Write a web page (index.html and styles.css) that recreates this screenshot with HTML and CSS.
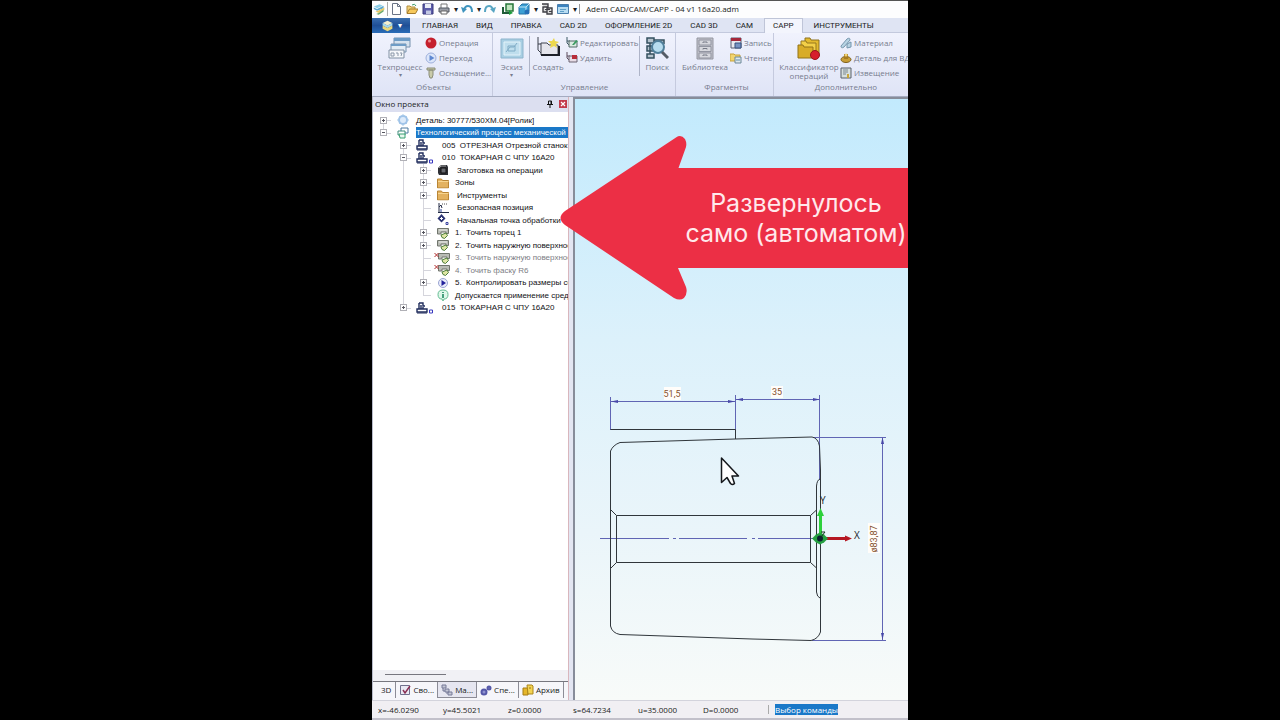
FILE: index.html
```html
<!DOCTYPE html>
<html lang="ru">
<head>
<meta charset="utf-8">
<title>Adem CAD/CAM/CAPP - 04 v1 16a20.adm</title>
<link rel="stylesheet" href="styles.css">
</head>
<body>
<svg class="defs" aria-hidden="true">
  <defs>
    <symbol id="logo" viewBox="0 0 16 16"><path d="M1 5l7-3 4 2-7 3z" fill="#8fd0e8"/><path d="M1 8l4 2 8-3v-3l-8 4-4-2z" fill="#5aa7d0"/><path d="M3 11l4 2 7-4V6L6 10z" fill="#e8c96a"/><path d="M4 14l3 1 6-4v-2l-6 4z" fill="#69a86c"/></symbol>
    <symbol id="logo-light" viewBox="0 0 16 16"><path d="M2 5l6-3 6 3-6 3z" fill="#f4f1cf"/><path d="M2 5v3l6 3 6-3V5L8 8z" fill="#a9dcee"/><path d="M2 8v4l6 3 6-3V8l-6 3z" fill="#e9d77a"/></symbol>
    <symbol id="lathe" viewBox="0 0 14 12"><path d="M3 1h4v3h2M3 1v6M1 7h10v3H1zM5 3v4M7 5v2" fill="none" stroke="#202d5c" stroke-width="1.4"/><path d="M1 11h10" stroke="#202d5c"/></symbol>
    <symbol id="lathe2" viewBox="0 0 18 12"><path d="M3 1h4v3h2M3 1v6M1 7h10v3H1zM5 3v4M7 5v2" fill="none" stroke="#202d5c" stroke-width="1.4"/><path d="M1 11h10" stroke="#202d5c"/><path d="M13.500 8h3v3h-3z" fill="#fff" stroke="#3a3ac0"/></symbol>
    <symbol id="folder" viewBox="0 0 12 11"><path d="M.5 1.500h4l1 1.500h6v7.500H.5z" fill="#e3b260" stroke="#b98534"/><path d="M1 4h10.500" stroke="#f7d58f"/></symbol>
    <symbol id="cut" viewBox="0 0 12 12"><path d="M.5 1.500h11v5H9V5H4v2H.5z" fill="#b9bcb5" stroke="#70756c"/><path d="M2 3h8" stroke="#eef0ea"/><path d="M4 8l5-2 1.500 2.500-3 3-2.500-1z" fill="#dfe6a5" stroke="#4c7d3a"/></symbol>
    <symbol id="cutx" viewBox="0 0 16 12"><path d="M4.500 1.500h11v5H13V5H8v2H4.500z" fill="#b9bcb5" stroke="#70756c"/><path d="M8 8l5-2 1.500 2.500-3 3-2.500-1z" fill="#dfe6a5" stroke="#4c7d3a"/><path d="M.5 1l4 4M4.500 1l-4 4" stroke="#b02a2a"/></symbol>
  </defs>
</svg>
<main class="app">
  <header class="titlebar">
    <svg class="app-logo" viewBox="0 0 16 16"><use href="#logo"/></svg>
    <div class="quick">
      <button aria-label="Новый"><svg viewBox="0 0 12 12"><path d="M2.500.5h5l3 3v8h-8z" fill="#fff" stroke="#6b7486"/><path d="M7.500.5v3h3" fill="none" stroke="#6b7486"/></svg></button>
      <button aria-label="Открыть"><svg viewBox="0 0 12 12"><path d="M1 10V3h3l1 1h4v2" fill="#f2d27a" stroke="#b08a3c"/><path d="M1 10.500L3.500 6H12l-2.500 4.500z" fill="#f7c95b" stroke="#a47b2e"/><path d="M6 2q3-2 4 1" stroke="#3d9d6a" fill="none"/></svg></button>
      <button aria-label="Сохранить"><svg viewBox="0 0 12 12"><path d="M1 1h10v10H1z" fill="#5c5caa" stroke="#39397c"/><path d="M3 1h6v4H3z" fill="#e9ecf7"/><path d="M4 7.500h5V11H4z" fill="#c2c8e3"/></svg></button>
      <button aria-label="Печать"><svg viewBox="0 0 12 12"><path d="M3 5V1h6v4" fill="#fff" stroke="#777"/><path d="M1 5h10v4H1z" fill="#9b9ea6" stroke="#555a64"/><path d="M3 8h6v3H3z" fill="#fff" stroke="#666"/></svg></button>
      <button class="caret" aria-label="Варианты печати">▾</button>
      <button aria-label="Отменить"><svg viewBox="0 0 12 12"><path d="M3 7q1-4 4-4 4 0 4 6" fill="none" stroke="#3e93bd" stroke-width="2"/><path d="M0 4l2 6 4-4z" fill="#3e93bd"/></svg></button>
      <button class="caret" aria-label="Список отмен">▾</button>
      <button aria-label="Вернуть"><svg viewBox="0 0 12 12"><path d="M9 7q-1-4-4-4-4 0-4 6" fill="none" stroke="#58a5c2" stroke-width="2"/><path d="M12 4l-2 6-4-4z" fill="#58a5c2"/></svg></button>
      <button class="apart" aria-label="Обновить"><svg viewBox="0 0 12 12"><path d="M4 1h7v7H4z" fill="#bfe4bd" stroke="#27753a" stroke-width="1.5"/><path d="M1 4v6h7" fill="none" stroke="#1f5c37" stroke-width="2"/><path d="M7 7l4 3-4 2z" fill="#1c9c3c"/></svg></button>
      <button aria-label="Вид"><svg viewBox="0 0 12 12"><path d="M1 4l3-3h7v7l-3 3H1z" fill="#3c9fd4" stroke="#2473a6"/><path d="M1 4h7v7M8 4l3-3" fill="none" stroke="#bfe6f7"/><circle cx="9" cy="9" r="2.500" fill="#256fb6"/></svg></button>
      <button class="caret" aria-label="Варианты вида">▾</button>
      <button aria-label="Слои"><svg viewBox="0 0 12 12"><path d="M1 1h6v3H2v5h4M6 5h5v6H6z" fill="#d9d9d9" stroke="#3f3f46" stroke-width="1.400"/><path d="M4 6.500h5M8 8.500h3" stroke="#3f3f46"/></svg></button>
      <button aria-label="Окно"><svg viewBox="0 0 12 12"><path d="M.5 1.500h11v9H.5z" fill="#b7dcf2" stroke="#4a7fae"/><path d="M1 3h10" stroke="#3b83c0" stroke-width="2"/><path d="M3 6.500h6M3 8.500h4" stroke="#5f9fc8"/></svg></button>
      <button class="caret" aria-label="Настройка панели">▾</button>
    </div>
    <h1 class="title">Adem CAD/CAM/CAPP - 04 v1 16a20.adm</h1>
  </header>

  <nav class="tabs">
    <button class="appmenu" aria-label="Меню"><svg viewBox="0 0 16 16"><use href="#logo-light"/></svg><span>▾</span></button>
    <button>ГЛАВНАЯ</button>
    <button>ВИД</button>
    <button>ПРАВКА</button>
    <button>CAD 2D</button>
    <button>ОФОРМЛЕНИЕ 2D</button>
    <button>CAD 3D</button>
    <button>CAM</button>
    <button class="active">CAPP</button>
    <button>ИНСТРУМЕНТЫ</button>
  </nav>

  <div class="ribbon">
    <section class="group objects">
      <div class="tools">
        <button class="big"><svg viewBox="0 0 24 24"><path d="M6 2h16v9H6z" fill="#d5e2ef" stroke="#7692ae"/><path d="M6 3.500h16" stroke="#6e9cc6" stroke-width="3"/><path d="M3 8h15v8H3z" fill="#e3ecf5" stroke="#7692ae"/><path d="M3 9h15" stroke="#6e9cc6" stroke-width="2"/><path d="M1 14h15v8H1z" fill="#f5f7fa" stroke="#8090a3"/><path d="M3 17h3v3H3zM8 17h2v3M12 17h2l-1 3" fill="none" stroke="#8a97a8"/></svg><span>Техпроцесс</span><i>▾</i></button>
        <div class="stack">
          <button><svg viewBox="0 0 12 12"><circle cx="6" cy="6" r="5.500" fill="#c5202d"/><circle cx="4.500" cy="4" r="1.500" fill="#ee8d8d"/></svg><span>Операция</span></button>
          <button><svg viewBox="0 0 12 12"><circle cx="6" cy="6" r="5" fill="#dce6fa" stroke="#9eb0dc"/><path d="M4.500 3l5 3-5 3z" fill="#5e88d1"/></svg><span>Переход</span></button>
          <button><svg viewBox="0 0 12 12"><path d="M2 1h8v2H2zM4 3h4v5l-1 3H5L4 8z" fill="#c9cba9" stroke="#8a8d78"/></svg><span>Оснащение...</span></button>
        </div>
      </div>
      <h2>Объекты</h2>
    </section>
    <section class="group manage">
      <div class="tools">
        <button class="big"><svg viewBox="0 0 24 24"><path d="M1 3h22v19H1z" fill="#a9cfe3" stroke="#8db4cc"/><path d="M4 6h16v13H4z" fill="#bfdeed" stroke="#e4f3fa"/><path d="M6 16l4-5h4l3-4M8 10h7v5H8z" fill="none" stroke="#7fabc5"/></svg><span>Эскиз</span><i>▾</i></button>
        <hr>
        <button class="big"><svg viewBox="0 0 24 24"><path d="M2 1v13l3 3M2 8h5" fill="none" stroke="#3b3f4b"/><path d="M5 7h6l2 2h9v10H5z" fill="#e5e5ec" stroke="#41454f"/><path d="M5 19h18V10" stroke="#1d2028" stroke-width="2" fill="none"/><path d="M18 2l1 3 4 1-3 2 1 4-3-2-4 2 1-4-3-3h4z" fill="#ecd84d"/></svg><span>Создать</span></button>
        <div class="stack">
          <button><svg viewBox="0 0 12 12"><path d="M1 0v6l2 2M1 4h3" fill="none" stroke="#3d5964"/><path d="M3 4h8v6H3z" fill="#dcebe3" stroke="#536b69"/><path d="M6 8l4-5 2 1-4 4z" fill="#3b9c62"/></svg><span>Редактировать</span></button>
          <button><svg viewBox="0 0 12 12"><path d="M1 0v6l2 2M1 4h3" fill="none" stroke="#5c4a5c"/><path d="M3 4h8v6H3z" fill="#e7dce6" stroke="#6d6472"/><path d="M6 3h5v4H6z" fill="#b72d3b"/></svg><span>Удалить</span></button>
        </div>
        <hr>
        <button class="big"><svg viewBox="0 0 24 24"><path d="M2 2h7v5H2zM2 10h7v5H2zM2 18h7v4H2zM9 4h10v4M5 7v11" fill="#b5c3cd" stroke="#35505f" stroke-width="1.500"/><circle cx="13" cy="11" r="6" fill="#b6dcef" stroke="#507f9b" stroke-width="2"/><path d="M17 16l6 6" stroke="#555c66" stroke-width="3"/></svg><span>Поиск</span></button>
      </div>
      <h2>Управление</h2>
    </section>
    <section class="group fragments">
      <div class="tools">
        <button class="big"><svg viewBox="0 0 24 24"><path d="M4 2h16v21H4z" fill="#bfc0c9" stroke="#9496a0"/><path d="M6 4h12v5H6zM6 10.500h12v5H6zM6 17h12v5H6z" fill="#d6d7dd" stroke="#9295a1"/><path d="M10 7v-1h4v1M10 13.500v-1h4v1M10 20v-1h4v1" fill="none" stroke="#777b87"/></svg><span>Библиотека</span></button>
        <div class="stack">
          <button><svg viewBox="0 0 12 12"><path d="M1 1h10v10H1z" fill="#e9e9ef" stroke="#585c70"/><path d="M1 1h10v3H1z" fill="#a5273b"/><path d="M5 6h6v5H5z" fill="#7792c1" stroke="#36517f"/></svg><span>Запись</span></button>
          <button><svg viewBox="0 0 12 12"><path d="M0 2h4l1 1h5v6H0z" fill="#f2d56f" stroke="#c9a33a"/><path d="M5 5h6v6H5z" fill="#dfe8ee" stroke="#6a8797"/><path d="M6 8h4" stroke="#5f8fa8"/></svg><span>Чтение</span></button>
        </div>
      </div>
      <h2>Фрагменты</h2>
    </section>
    <section class="group extra">
      <div class="tools">
        <button class="big"><svg viewBox="0 0 24 24"><path d="M8 2h5l1 2h8v14H8z" fill="#e3ba2e" stroke="#8f731e"/><path d="M4 5h5l1 2h9v13H4z" fill="#f2cf48" stroke="#97791e"/><path d="M1 9h5l1 2h9v11H1z" fill="#d8ac28" stroke="#927317"/><circle cx="18" cy="19" r="4.500" fill="#d71f2c" stroke="#98141d"/></svg><span>Классификатор операций</span></button>
        <div class="stack">
          <button><svg viewBox="0 0 12 12"><path d="M1 9l6-7q3-2 3 1L4 10q-3 2-3-1zM7 11V7l4-2v5z" fill="#b7d3e3" stroke="#7596ad"/></svg><span>Материал</span></button>
          <button><svg viewBox="0 0 12 12"><ellipse cx="6" cy="7.500" rx="5" ry="3" fill="#c99f36" stroke="#7e5e18"/><path d="M4 2h4v5H4z" fill="#a67c22"/><circle cx="6" cy="3" r="1.500" fill="#f1d477"/></svg><span>Деталь для ВД</span></button>
          <button><svg viewBox="0 0 12 12"><path d="M1 1h10v10H1z" fill="#d7dfde" stroke="#59616a"/><path d="M3 3h5M3 5h5M3 7h3" stroke="#7b8992"/><path d="M8 7v4" stroke="#c8a63c" stroke-width="2"/></svg><span>Извещение</span></button>
        </div>
      </div>
      <h2>Дополнительно</h2>
    </section>
  </div>

  <div class="work">
    <aside class="project">
      <header class="panel-head"><h2>Окно проекта</h2>
        <button class="pin" aria-label="Закрепить"><svg viewBox="0 0 8 8"><path d="M2.500 1h3v3.500M2.500 1v3.500M1 4.500h6M4 5v3M5 1v3" fill="none" stroke="#111"/></svg></button>
        <button class="close" aria-label="Закрыть"><svg viewBox="0 0 8 8"><path d="M2 2l4 4M6 2L2 6" stroke="#fff" stroke-width="1.200"/></svg></button>
      </header>
      <div class="tree" role="tree">
        <div class="row" role="treeitem"><span class="cell first"><button class="exp" aria-label="Развернуть"><svg viewBox="0 0 5 5"><path d="M1 2.500h3M2.500 1v3"/></svg></button></span><span class="ico"><svg viewBox="0 0 12 12"><circle cx="6" cy="6" r="4" fill="#dceafa" stroke="#9fc3e8" stroke-width="2"/><path d="M6 0v12M0 6h12M2 2l8 8M10 2l-8 8" stroke="#a9cbea" stroke-dasharray="2 8"/></svg></span><span class="label l0">Деталь: 30777/530ХМ.04[Ролик]</span></div>
        <div class="row" role="treeitem"><span class="cell last"><button class="exp" aria-label="Свернуть"><svg viewBox="0 0 5 5"><path d="M1 2.500h3"/></svg></button></span><span class="ico"><svg viewBox="0 0 12 12"><path d="M4 1h7v5H4z" fill="#fff" stroke="#4a78a0"/><path d="M1 4h7v4H1z" fill="#fff" stroke="#3f8c7b"/><path d="M2 7h6v4H3z" fill="#e8f7ef" stroke="#39a070"/></svg></span><span class="label l0 selected">Технологический процесс механической о</span></div>
        <div class="row" role="treeitem"><span class="pad"></span><span class="cell first"><button class="exp" aria-label="Развернуть"><svg viewBox="0 0 5 5"><path d="M1 2.500h3M2.500 1v3"/></svg></button></span><span class="ico"><svg class="lathe" viewBox="0 0 14 12"><use href="#lathe"/></svg></span><span class="label l1">005&nbsp; ОТРЕЗНАЯ Отрезной станок B</span></div>
        <div class="row" role="treeitem"><span class="pad"></span><span class="cell"><button class="exp" aria-label="Свернуть"><svg viewBox="0 0 5 5"><path d="M1 2.500h3"/></svg></button></span><span class="ico"><svg class="wide" viewBox="0 0 18 12"><use href="#lathe2"/></svg></span><span class="label l1">010&nbsp; ТОКАРНАЯ С ЧПУ 16А20</span></div>
        <div class="row" role="treeitem"><span class="pad"></span><span class="guide"></span><span class="cell"><button class="exp" aria-label="Развернуть"><svg viewBox="0 0 5 5"><path d="M1 2.500h3M2.500 1v3"/></svg></button></span><span class="ico"><svg viewBox="0 0 12 12"><path d="M1 4l3-3h6l1 2v8H2L1 9z" fill="#2e3036"/><path d="M4 4h5v5H4z" fill="#66696f" stroke="#111"/><path d="M2 4l2-2h5" stroke="#999" fill="none"/></svg></span><span class="label l2">Заготовка на операции</span></div>
        <div class="row" role="treeitem"><span class="pad"></span><span class="guide"></span><span class="cell"><button class="exp" aria-label="Развернуть"><svg viewBox="0 0 5 5"><path d="M1 2.500h3M2.500 1v3"/></svg></button></span><span class="ico"><svg viewBox="0 0 12 11"><use href="#folder"/></svg></span><span class="label l3">Зоны</span></div>
        <div class="row" role="treeitem"><span class="pad"></span><span class="guide"></span><span class="cell"><button class="exp" aria-label="Развернуть"><svg viewBox="0 0 5 5"><path d="M1 2.500h3M2.500 1v3"/></svg></button></span><span class="ico"><svg viewBox="0 0 12 11"><use href="#folder"/></svg></span><span class="label l2">Инструменты</span></div>
        <div class="row" role="treeitem"><span class="pad"></span><span class="guide"></span><span class="cell"></span><span class="ico"><svg viewBox="0 0 12 12"><path d="M2 1v4l2-2 1 3M2 5v5M1 10.500h11" fill="none" stroke="#222b45"/><path d="M5 2h6" stroke="#555" stroke-dasharray="1 1"/><path d="M4 7v3" stroke="#31449a"/></svg></span><span class="label l2">Безопасная позиция</span></div>
        <div class="row" role="treeitem"><span class="pad"></span><span class="guide"></span><span class="cell"></span><span class="ico"><svg viewBox="0 0 12 12"><path d="M4.500 0l4 4.500-4 4-4-4z" fill="#2b3372"/><path d="M3 4.500h3M4.500 3v3" stroke="#fff"/><path d="M9 8.500h2v2H9z" fill="#fff" stroke="#3a43a0"/></svg></span><span class="label l2">Начальная точка обработки</span></div>
        <div class="row" role="treeitem"><span class="pad"></span><span class="guide"></span><span class="cell"><button class="exp" aria-label="Развернуть"><svg viewBox="0 0 5 5"><path d="M1 2.500h3M2.500 1v3"/></svg></button></span><span class="ico"><svg viewBox="0 0 12 12"><use href="#cut"/></svg></span><span class="label l3">1.&nbsp; Точить торец 1</span></div>
        <div class="row" role="treeitem"><span class="pad"></span><span class="guide"></span><span class="cell"><button class="exp" aria-label="Развернуть"><svg viewBox="0 0 5 5"><path d="M1 2.500h3M2.500 1v3"/></svg></button></span><span class="ico"><svg viewBox="0 0 12 12"><use href="#cut"/></svg></span><span class="label l3">2.&nbsp; Точить наружную поверхност</span></div>
        <div class="row muted" role="treeitem"><span class="pad"></span><span class="guide"></span><span class="cell"></span><span class="ico"><svg class="crossed" viewBox="0 0 16 12"><use href="#cutx"/></svg></span><span class="label l3">3.&nbsp; Точить наружную поверхност</span></div>
        <div class="row muted" role="treeitem"><span class="pad"></span><span class="guide"></span><span class="cell"></span><span class="ico"><svg class="crossed" viewBox="0 0 16 12"><use href="#cutx"/></svg></span><span class="label l3">4.&nbsp; Точить фаску R6</span></div>
        <div class="row" role="treeitem"><span class="pad"></span><span class="guide"></span><span class="cell"><button class="exp" aria-label="Развернуть"><svg viewBox="0 0 5 5"><path d="M1 2.500h3M2.500 1v3"/></svg></button></span><span class="ico"><svg viewBox="0 0 12 12"><circle cx="6" cy="6" r="4.500" fill="#e9ecfa" stroke="#9aa4d2"/><path d="M4.500 3l4.500 3-4.500 3z" fill="#23239c"/></svg></span><span class="label l3">5.&nbsp; Контролировать размеры со</span></div>
        <div class="row" role="treeitem"><span class="pad"></span><span class="guide"></span><span class="cell last"></span><span class="ico"><svg viewBox="0 0 12 12"><path d="M6 1q5 0 5 4.500T7 10l-1 2-1-2Q1 10 1 5.500T6 1z" fill="#dff7ea" stroke="#63bd92"/><path d="M6 3v1M6 5v4" stroke="#14825a" stroke-width="1.500"/></svg></span><span class="label l3">Допускается применение средс</span></div>
        <div class="row" role="treeitem"><span class="pad"></span><span class="cell last"><button class="exp" aria-label="Развернуть"><svg viewBox="0 0 5 5"><path d="M1 2.500h3M2.500 1v3"/></svg></button></span><span class="ico"><svg class="wide" viewBox="0 0 18 12"><use href="#lathe2"/></svg></span><span class="label l1">015&nbsp; ТОКАРНАЯ С ЧПУ 16А20</span></div>
      </div>
      <div class="hscroll"><span></span></div>
      <nav class="panel-tabs">
        <button class="t3d">3D</button>
        <button><svg viewBox="0 0 12 12"><path d="M1.500 1.500h9v9h-9z" fill="#e9e9f3" stroke="#70708d"/><path d="M4 6l2 3 5-7" fill="none" stroke="#8a2f54" stroke-width="1.500"/></svg>Сво...</button>
        <button class="active"><svg viewBox="0 0 12 12"><path d="M1 1h4v3H1zM4 5h4v3H4zM7 8h4v3H7zM2 4v3h2M6 8v2" fill="#c3c5d4" stroke="#777b98"/></svg>Ма...</button>
        <button><svg viewBox="0 0 12 12"><circle cx="4" cy="8" r="2.500" fill="#8f92d0" stroke="#5558a8" stroke-width="2"/><circle cx="9" cy="4" r="1.500" fill="#8f92d0" stroke="#5558a8" stroke-width="2"/></svg>Спе...</button>
        <button><svg viewBox="0 0 12 12"><path d="M1 4h5v7H1z" fill="#e5b62b" stroke="#a57c14"/><path d="M5 1h5l1 1v8H6z" fill="#f3d352" stroke="#ab851b"/><path d="M7 4h2" stroke="#9a7612"/></svg>Архив</button>
      </nav>
    </aside>

    <section class="canvas" aria-label="Чертёж">
      <svg viewBox="575 99 333 601" preserveAspectRatio="xMaxYMin meet">
        <defs>
          <marker id="dim" viewBox="0 0 7 4" refX="7" refY="2" markerWidth="7" markerHeight="4" orient="auto-start-reverse"><path d="M0 .5L7 2 0 3.500z" fill="#4848a8"/></marker>
        </defs>
        <g class="dims">
          <path d="M610.500 397V430M735.500 395V430M819.500 395V480M813 437.500H886M812 640.500H886"/>
          <path d="M611 401.500H735" marker-start="url(#dim)" marker-end="url(#dim)"/>
          <path d="M736 399.500H820" marker-start="url(#dim)" marker-end="url(#dim)"/>
          <path d="M882.500 437V640" marker-start="url(#dim)" marker-end="url(#dim)"/>
          <path d="M600 538.500H669M673 538.500H676M679 538.500H747M752 538.500H755M758 538.500H820"/>
        </g>
        <g class="part">
          <path d="M610.500 429.500H735.500V439"/>
          <path d="M610.500 451Q613 445 620 442.500L735 439L812 437Q818 438 819.500 446L820.500 470V632Q818 639 811 640.500L752 639L620 634.500Q612 633 610.500 626Z"/>
          <path d="M616.500 515.500H810.500V562.500H616.500Z"/>
          <path d="M611 510L616.500 515.500M611 568L616.500 562.500M810.500 515.500L816.500 510M810.500 562.500L816.500 568"/>
          <path d="M820 479Q817 480 816.500 486V592Q817 597 820 598"/>
        </g>
        <g class="dimtext">
          <rect x="664" y="387" width="17" height="13"/><text x="672" y="397">51,5</text>
          <rect x="771" y="386" width="12" height="12"/><text x="777" y="395">35</text>
          <rect x="868" y="523" width="12" height="30"/><text transform="translate(877 539) rotate(-90)">ø83,87</text>
        </g>
        <path d="M820.500 537V512" stroke="#2ed13b" stroke-width="3"/><path d="M817 516l3.500-8 3.500 8z" fill="#2ed13b"/>
        <path d="M824 538.500H846" stroke="#b51722" stroke-width="3"/><path d="M845 535.500l7 3-7 3z" fill="#b51722"/>
        <path d="M812 538.500l4-4 4-2 4 2 4 4-4 4-4 2-4-2z" fill="#26a042"/><circle cx="820" cy="538.500" r="3" fill="#0c2230"/>
        <g class="axes"><text x="854" y="539">X</text><text x="820" y="504">Y</text><path d="M821 532h4l-4 5" fill="none" stroke="#153123"/></g>
        <path d="M721.500 458v24.500l5.500-5 3.500 6q2 2 4 0l-2.500-7.500h6.500z" fill="#fff" stroke="#15181c" stroke-width="1.500" stroke-linejoin="round"/>
      </svg>
    </section>
    <div class="callout">
      <svg viewBox="560 134 348 167" aria-hidden="true"><path d="M565 211L676 137.500Q681 134 685 139Q687 143 686 147L678.500 168H908V268H678L686 287Q688 293 684 298Q680 301 674 298L565 225Q556 218 565 211Z" fill="#ec2f45"/></svg>
      <p>Развернулось<br>само (автоматом)</p>
    </div>
  </div>

  <footer class="status">
    <span>x=-46.0290</span><span>y=45.5021</span><span>z=0.0000</span><span>s=64.7234</span><span>u=35.0000</span><span>D=0.0000</span><span class="prompt"><mark>Выбор команды</mark></span>
  </footer>
</main>
</body>
</html>
```
FILE: styles.css
```css
* { box-sizing: border-box; }
body { margin: 0; min-height: 100vh; display: flex; justify-content: center; background: #000; font-family: "Open Sans", "Noto Sans", sans-serif; font-size: 8px; line-height: 10px; color: #1a1c22; overflow: hidden; }
button { margin: 0; padding: 0; border: 0; background: none; font: inherit; color: inherit; white-space: nowrap; }
h1, h2, p { margin: 0; font: inherit; }
svg { display: block; flex: none; }
.defs { position: absolute; width: 0; height: 0; }
.app { width: 41.875%; min-width: 536px; height: 100vh; display: flex; flex-direction: column; overflow: hidden; background: #eef0f8; }

.titlebar { height: 18px; flex: none; display: flex; align-items: center; padding-bottom: 2px; background: #fdfdfe; border-top: 1px solid #555; }
.app-logo { width: 16px; height: 14px; padding: 0 1px; border-right: 1px solid #aaa; }
.quick { display: flex; align-items: center; }
.quick button { width: 16px; display: flex; justify-content: center; }
.quick svg { width: 12px; height: 12px; }
.quick .caret { width: 7px; font-size: 8px; }
.quick .apart { margin-left: 2px; }
.title { padding-left: 6px; margin-left: 1px; border-left: 1px solid #999; white-space: nowrap; }

.tabs { height: 15px; flex: none; display: flex; background: #dfe4f3; border-bottom: 1px solid #c3c9dd; font-family: Roboto, "Open Sans", sans-serif; white-space: nowrap; }
.tabs button { padding: 0 9px; height: 15px; }
.tabs .appmenu { width: 38px; margin-right: 3px; padding: 0; display: flex; justify-content: center; align-items: center; gap: 4px; background: linear-gradient(#3a6fb0, #1f4f96 50%, #2a6db8); color: #fff; }
.appmenu svg { width: 13px; height: 13px; }
.tabs .active { padding: 0 8px; margin: 0 2px; background: #f3f5fd; border: 1px solid #bfc5d8; border-bottom: 0; }

.ribbon { height: 64px; flex: none; display: flex; background: linear-gradient(#f0f2fd, #dfe4f6); border-bottom: 1px solid #a4abc0; color: #777c8e; }
.group { display: flex; flex-direction: column; justify-content: space-between; flex: none; padding: 3px 0 4px; border-right: 1px solid #c5cade; }
.group h2 { text-align: center; }
.objects { width: 121px; padding-left: 3px; }
.manage { width: 183px; padding-left: 1px; }
.fragments { width: 98px; padding-left: 4px; }
.extra { flex: 1 0 134px; padding-left: 4px; border: 0; }
.extra h2 { padding-left: 4px; }
.tools { display: flex; }
.big { display: flex; flex-direction: column; align-items: center; width: 50px; }
.big svg { width: 24px; height: 24px; margin-bottom: 2px; }
.big i { font-style: normal; font-size: 6px; line-height: 8px; }
.big span { line-height: 9px; }
.manage .big { width: 36px; }
.extra .big { width: 62px; }
.extra .big span { white-space: normal; }
.stack { display: flex; flex-direction: column; gap: 1px; }
.stack button { height: 14px; display: flex; align-items: center; gap: 2px; }
.stack svg { width: 12px; height: 12px; }
.tools hr { width: 1px; height: 40px; margin: 0; border: 0; background: #aeb4c8; }
.manage .stack { width: 73px; }

.work { flex: 1; min-height: 0; display: flex; position: relative; background: #e3e6f2; }
.project { width: 197px; flex: none; display: flex; flex-direction: column; border-left: 1px solid #b9bccb; border-right: 1px solid #d9b6bd; background: #fff; }
.panel-head { height: 15px; flex: none; display: flex; align-items: center; padding: 0 1px 2px 2px; background: #dcdff0; }
.panel-head h2 { flex: 1; }
.panel-head svg { width: 8px; height: 8px; }
.pin { margin-right: 5px; }
.close { background: #c33a4c; }
.tree { height: 200px; margin-top: 2px; flex: none; display: grid; grid-auto-rows: 1fr; overflow: hidden; font-family: "Liberation Sans", Arial, sans-serif; line-height: 11px; color: #101014; }
.row { display: flex; align-items: center; white-space: nowrap; min-width: 0; overflow: hidden; }
.row.muted { color: #7c7d84; }
.pad, .guide, .cell, .ico { width: 20px; flex: none; align-self: stretch; display: flex; align-items: center; justify-content: center; }
.guide, .cell { background: linear-gradient(#d5d5dc, #d5d5dc) 10px 0 / 1px 100% no-repeat; }
.cell { background: linear-gradient(#d5d5dc, #d5d5dc) 10px 0 / 1px 100% no-repeat, linear-gradient(#d5d5dc, #d5d5dc) 10px 6px / 8px 1px no-repeat; }
.cell.first { background-position: 10px 6px, 10px 6px; }
.cell.last { background-size: 1px 6px, 8px 1px; }
.exp { width: 7px; height: 7px; border: 1px solid #b0b0b6; background: #fff; }
.exp svg { width: 5px; height: 5px; stroke: #55555e; }
.ico svg { width: 12px; height: 12px; }
.ico .lathe { width: 14px; }
.ico .wide { width: 18px; margin-left: 3px; }
.ico .crossed { width: 16px; margin-right: 3px; }
.label.l0 { margin-left: 3px; }
.label.l1 { margin-left: 9px; }
.label.l2 { margin-left: 4px; }
.label.l3 { margin-left: 2px; }
.label.selected { flex: 1; overflow: hidden; background: #1a78c8; color: #fff; }
.hscroll { margin-top: auto; height: 12px; flex: none; padding: 4px 12px; background: #f1f1f5; border-bottom: 1px solid #77777f; }
.hscroll span { display: block; width: 61px; height: 1px; background: #77777f; }
.panel-tabs { display: flex; height: 18px; flex: none; padding-bottom: 2px; background: #f6f6fa; }
.panel-tabs button { display: flex; align-items: center; gap: 2px; padding: 0 3px; border-right: 1px solid #8c8c96; }
.panel-tabs .t3d { padding: 0 4px 0 8px; }
.panel-tabs svg { width: 12px; height: 12px; }
.panel-tabs .active { background: #e6e6f0; border-bottom: 1px solid #8c8c96; }
.canvas { flex: 1; min-width: 0; margin-left: 4px; border-left: 2px solid #878d9a; border-top: 2px solid #878d9a; background: linear-gradient(#c2eafd, #dcf1fb 40%, #eaf5fa 72%, #f8fbf9); }
.canvas svg { width: 100%; height: 100%; }
.dims { fill: none; stroke: #6065b4; }
.part { fill: none; stroke: #30363b; }
.dimtext { font-family: Roboto, sans-serif; font-size: 9px; text-anchor: middle; fill: #85502e; }
.dimtext rect { fill: #fffdfa; }
.axes { font-size: 10px; fill: #20252c; }
.callout { position: absolute; right: 0; top: 37px; width: 348px; height: 167px; display: flex; align-items: center; justify-content: flex-end; }
.callout svg { position: absolute; inset: 0; width: 100%; height: 100%; }
.callout p { position: relative; width: 224px; text-align: center; white-space: nowrap; color: #ffe9ec; font-family: Inter, "Open Sans", sans-serif; font-size: 25px; font-weight: 400; line-height: 30px; }

.status { height: 20px; flex: none; display: flex; align-items: center; padding-left: 6px; background: #f1eff3; border-top: 1px solid #d3d3dc; border-bottom: 2px solid #c2c0ca; white-space: nowrap; }
.status span { width: 65px; flex: none; line-height: 9px; }
.status .prompt { padding-left: 6px; width: auto; border-left: 1px solid #aaa; }
.status mark { background: #1a78c8; color: #fff; }
```
